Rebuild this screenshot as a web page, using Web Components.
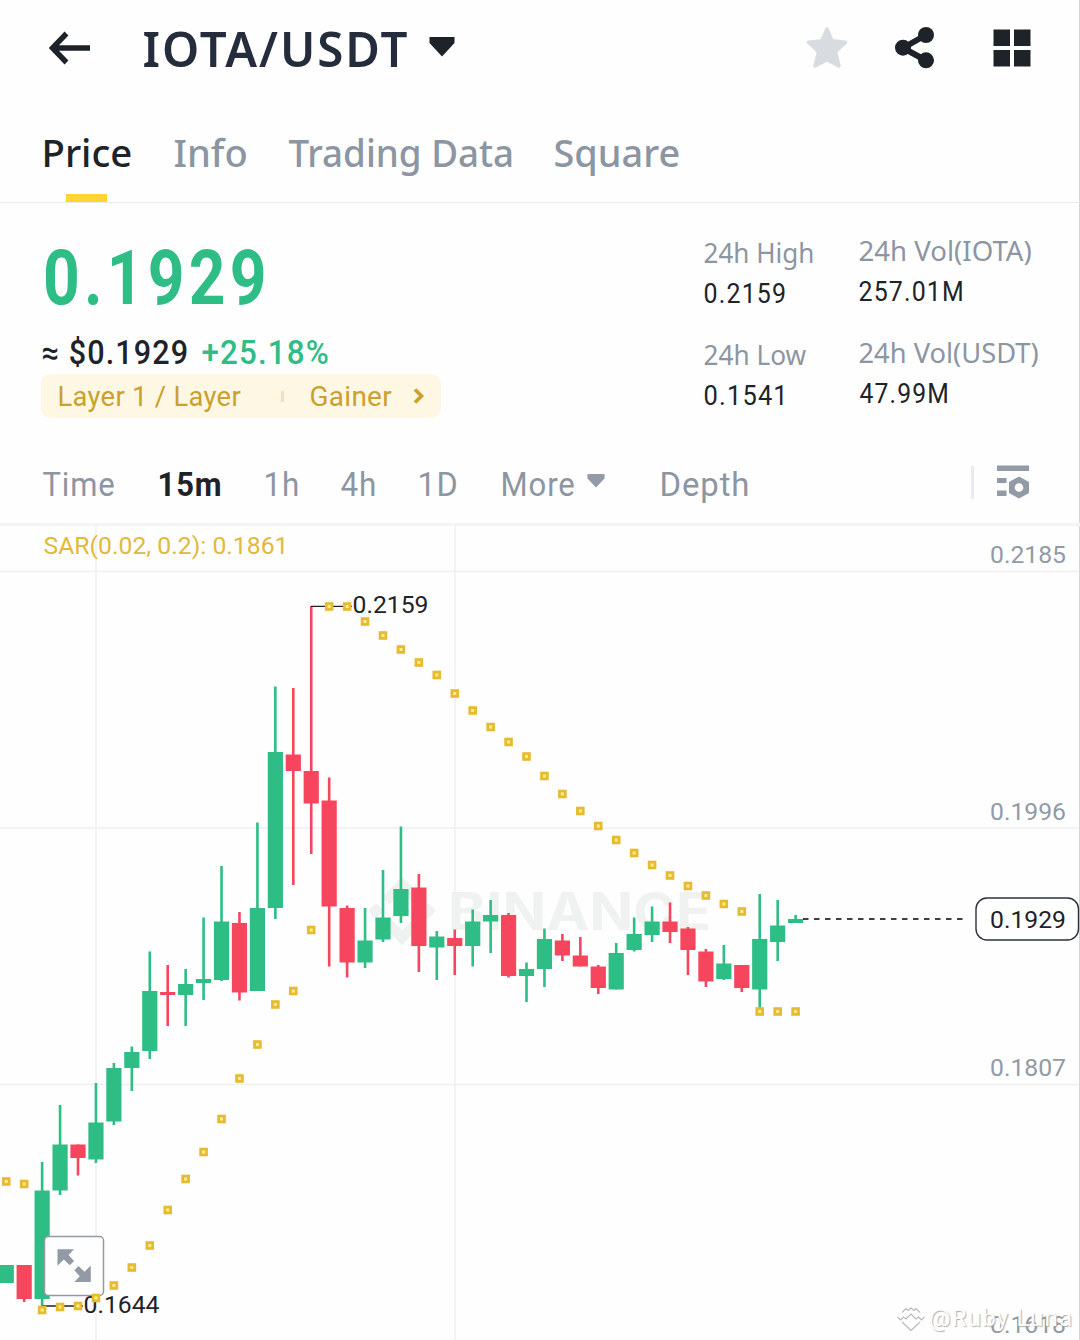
<!DOCTYPE html>
<html lang="en">
<head>
  <meta charset="utf-8" />
  <title>IOTA/USDT</title>
  <style>
    body {
      margin: 0;
      background: #fefefe;
      font-family: Roboto, "Liberation Sans", sans-serif;
      color: #1e2329;
    }
  </style>
</head>
<body>
  <market-page>
    <market-header pair="IOTA/USDT"></market-header>
    <market-tabs>
      <market-tab active><fit-text width="86">Price</fit-text></market-tab>
      <market-tab style="margin-left: 44px"><fit-text width="72">Info</fit-text></market-tab>
      <market-tab style="margin-left: 42px"><fit-text width="223">Trading Data</fit-text></market-tab>
      <market-tab style="margin-left: 43px"><fit-text width="124">Square</fit-text></market-tab>
    </market-tabs>
    <price-summary></price-summary>
    <interval-bar></interval-bar>
    <candle-chart></candle-chart>
  </market-page>

  <template id="tpl-header">
    <style>
      :host {
        display: flex;
        align-items: center;
        height: 96px;
        box-sizing: border-box;
        padding: 0 49.5px 0 49px;
      }
      svg { display: block; flex: none; }
      .title {
        margin-left: 53px;
        font: 600 49px/60px "Noto Sans", sans-serif;
        letter-spacing: 2px;
        color: #252d3c;
      }
      .caret { margin-left: 22px; }
      .star { margin-left: auto; }
      .share { margin-left: 47.5px; }
      .grid { margin-left: 57.5px; }
    </style>
    <svg width="41" height="34" viewBox="0 0 41 34">
      <path d="M41 17H5M17.5 2.5L3.5 17L17.5 31.5" fill="none" stroke="#1e2329" stroke-width="5.4" />
    </svg>
    <fit-text class="title" width="264"></fit-text>
    <svg class="caret" width="26" height="22" viewBox="0 0 26 22">
      <path d="M0.5 0H25.5V6L13 19.5L0.5 6Z" fill="#1e2329" />
    </svg>
    <svg class="star" width="42" height="42" viewBox="0 0 42 42">
      <path d="M21 2L26 13.8L39.5 15.2L29.4 24.6L33 39L21 32.6L9 39L12.6 24.6L2.5 15.2L16 13.8Z"
        fill="#d8dce1" stroke="#d8dce1" stroke-width="3.5" stroke-linejoin="round" />
    </svg>
    <svg class="share" width="40" height="42" viewBox="0 0 40 42">
      <path d="M31 8L8 21L31 33.5" fill="none" stroke="#1e2329" stroke-width="6" />
      <g fill="#1e2329">
        <circle cx="8" cy="20.7" r="8" />
        <circle cx="31" cy="8" r="8" />
        <circle cx="31" cy="33.3" r="8" />
      </g>
    </svg>
    <svg class="grid" width="38" height="38" viewBox="0 0 38 38">
      <path d="M0.5 0.5H17V17H0.5ZM21 0.5H37.5V17H21ZM0.5 21H17V37.5H0.5ZM21 21H37.5V37.5H21Z" fill="#1e2329" />
    </svg>
  </template>

  <template id="tpl-summary">
    <style>
      :host {
        display: flex;
        justify-content: space-between;
        height: 240px;
        box-sizing: border-box;
        padding: 33px 41px 0 41px;
      }
      .left { padding: 2px 0 0 0; }
      .price {
        padding-left: 4px;
        font-size: 76px;
        line-height: 80px;
        font-weight: 700;
        letter-spacing: 5px;
        color: #2ebd85;
        height: 80px;
      }
      .sub {
        display: flex;
        gap: 16px;
        margin-top: 15px;
        padding-left: 1px;
        font-size: 33px;
        line-height: 40px;
        font-weight: 500;
        letter-spacing: 1.2px;
      }
      .up { color: #2ebd85; }
      .tag {
        display: flex;
        align-items: center;
        width: 400px;
        height: 44px;
        box-sizing: border-box;
        margin-top: 1px;
        padding: 0 16px 0 18px;
        border-radius: 10px;
        background: #fef7e4;
        color: #cba02c;
        font-size: 27px;
        line-height: 42px;
        letter-spacing: 0.3px;
      }
      .tag fit-text { padding-top: 2px; }
      .tag i {
        width: 3px;
        height: 11px;
        margin: 0 26px 0 41px;
        background: #f4e2b4;
      }
      .tag svg { margin-left: 22px; }
      .stats {
        display: grid;
        grid-template-columns: 155px 180px;
        gap: 0;
      }
      .col { display: flex; flex-direction: column; gap: 28px; }
      .col:first-child { padding-top: 2px; }
    </style>
    <div class="left">
      <div class="price"><fit-text width="218">0.1929</fit-text></div>
      <div class="sub">
        <fit-text width="144">≈ $0.1929</fit-text>
        <fit-text class="up" width="125">+25.18%</fit-text>
      </div>
      <div class="tag">
        <fit-text width="181">Layer 1 / Layer</fit-text>
        <i></i>
        <fit-text width="81">Gainer</fit-text>
        <svg width="12" height="16" viewBox="0 0 12 16">
          <path d="M2 1.5L8.5 8L2 14.5" fill="none" stroke="#cba02c" stroke-width="3.6" />
        </svg>
      </div>
    </div>
    <div class="stats">
      <div class="col">
        <stat-item label="24h High" value="0.2159" lw="108" vw="80"></stat-item>
        <stat-item label="24h Low" value="0.1541" lw="102" vw="78"></stat-item>
      </div>
      <div class="col">
        <stat-item label="24h Vol(IOTA)" value="257.01M" lw="172" vw="103"></stat-item>
        <stat-item label="24h Vol(USDT)" value="47.99M" lw="179" vw="88"></stat-item>
      </div>
    </div>
  </template>

  <template id="tpl-intervals">
    <style>
      :host {
        display: flex;
        align-items: center;
        height: 83px;
        box-sizing: border-box;
        border-bottom: 3px solid #f3f4f4;
        padding: 0 51px 0 42px;
        font-size: 32.5px;
        line-height: 40px;
        letter-spacing: 0.9px;
        color: #8c95a2;
      }
      fit-text { margin-right: 45px; padding-top: 3px; }
      .on { color: #1e2329; font-weight: 700; }
      .h1 { margin-right: 43px; }
      .d1 { margin-right: 46px; }
      .more { margin-right: 13px; }
      .caret { margin-right: 56px; }
      .sep { width: 3px; height: 33px; margin: -2px 23px 0 auto; background: #e9ebee; }
      .set { margin-top: -2px; }
    </style>
    <fit-text width="72">Time</fit-text>
    <fit-text class="on" width="61">15m</fit-text>
    <fit-text class="h1" width="32">1h</fit-text>
    <fit-text width="34">4h</fit-text>
    <fit-text class="d1" width="37">1D</fit-text>
    <fit-text class="more" width="72">More</fit-text>
    <svg class="caret" width="18" height="18" viewBox="0 0 18 18">
      <path d="M0.5 0H17.5V4.5L9 13.5L0.5 4.5Z" fill="#929aa5" />
    </svg>
    <fit-text width="86">Depth</fit-text>
    <span class="sep"></span>
    <svg class="set" width="32" height="34" viewBox="0 0 32 34" fill="#929aa5">
      <path d="M0 0.5H32V6H0ZM0 13H9.5V18H0ZM0 25.5H9.5V31H0Z" />
      <path fill-rule="evenodd" d="M22 11.5L32 17V28L22 33.5L12 28V17ZM22 18.2A4.3 4.3 0 1 0 22 26.8A4.3 4.3 0 1 0 22 18.2Z" />
    </svg>
  </template>

  <script>
    // Text squeezed or stretched so that its ink is exactly `width` px wide
    class FitText extends HTMLElement {
      connectedCallback() {
        this.attachShadow({ mode: "open" });
        this.shadowRoot.innerHTML = `
          <style>
            :host { display: block; flex: none; white-space: nowrap; }
            span { display: inline-block; transform-origin: 0 50%; }
          </style>
          <span><slot></slot></span>`;
        this.fit();
      }
      fit() {
        const width = Number(this.getAttribute("width"));
        const text = this.textContent.trim();
        const cs = getComputedStyle(this);
        const ctx = FitText.canvas.getContext("2d");
        ctx.font = `${cs.fontWeight} ${cs.fontSize} ${cs.fontFamily}`;
        const m = ctx.measureText(text);
        // letter-spacing falls between the glyphs only
        const gaps = (parseFloat(cs.letterSpacing) || 0) * (text.length - 1);
        const ink = m.actualBoundingBoxLeft + m.actualBoundingBoxRight + gaps;
        if (!ink) return;
        this.style.width = width + "px";
        this.shadowRoot.querySelector("span").style.transform =
          `scaleX(${width / ink}) translateX(${m.actualBoundingBoxLeft + 0.5}px)`;
      }
    }
    FitText.canvas = document.createElement("canvas");

    class MarketPage extends HTMLElement {
      connectedCallback() {
        this.attachShadow({ mode: "open" });
        this.shadowRoot.innerHTML = `
          <style>
            :host {
              display: flex;
              flex-direction: column;
              width: 1080px;
              height: 1340px;
              overflow: hidden;
              box-shadow: inset -1px 0 #d5d6d8;
            }
          </style>
          <slot></slot>`;
      }
    }

    class MarketHeader extends HTMLElement {
      connectedCallback() {
        this.attachShadow({ mode: "open" });
        const view = document.querySelector("#tpl-header").content.cloneNode(true);
        view.querySelector(".title").textContent = this.getAttribute("pair");
        this.shadowRoot.append(view);
      }
    }

    class MarketTabs extends HTMLElement {
      connectedCallback() {
        this.attachShadow({ mode: "open" });
        this.shadowRoot.innerHTML = `
          <style>
            :host {
              display: flex;
              height: 107px;
              box-sizing: border-box;
              padding-left: 44px;
              border-bottom: 1px solid #e9eaec;
            }
          </style>
          <slot></slot>`;
      }
    }

    class MarketTab extends HTMLElement {
      connectedCallback() {
        this.attachShadow({ mode: "open" });
        this.shadowRoot.innerHTML = `
          <style>
            :host {
              display: flex;
              flex-direction: column;
              align-items: center;
              justify-content: space-between;
              padding-top: 36px;
              font: 500 38px/40px "Noto Sans", sans-serif;
              color: #8c95a2;
            }
            :host([active]) { color: #1e2329; }
            :host([active]) i { width: 41px; height: 8px; margin-right: 2px; background: #fcd535; }
          </style>
          <slot></slot><i></i>`;
      }
    }

    class StatItem extends HTMLElement {
      connectedCallback() {
        const at = (name) => this.getAttribute(name);
        this.attachShadow({ mode: "open" });
        this.shadowRoot.innerHTML = `
          <style>
            :host { display: flex; flex-direction: column; gap: 6px; height: 74px; line-height: 34px; }
            .label { font-family: "Noto Sans", sans-serif; font-size: 27.5px; color: #8c95a2; margin-top: -2px; }
            .value { font-size: 28px; letter-spacing: 1.3px; margin-top: 1px; }
          </style>
          <fit-text class="label" width="${at("lw")}">${at("label")}</fit-text>
          <fit-text class="value" width="${at("vw")}">${at("value")}</fit-text>`;
      }
    }

    class PriceSummary extends HTMLElement {
      connectedCallback() {
        this.attachShadow({ mode: "open" });
        this.shadowRoot.append(document.querySelector("#tpl-summary").content.cloneNode(true));
      }
    }

    class IntervalBar extends HTMLElement {
      connectedCallback() {
        this.attachShadow({ mode: "open" });
        this.shadowRoot.append(document.querySelector("#tpl-intervals").content.cloneNode(true));
      }
    }

    // [direction, high, body top, body bottom, low]
    const candles = [
      ["u", 1265, 1265, 1283, 1283], ["d", 1265, 1265, 1299, 1302], ["u", 1162, 1190.5, 1299, 1306],
      ["u", 1105, 1144.5, 1190.5, 1195], ["d", 1144.5, 1144.5, 1158, 1175.5], ["u", 1083, 1122.5, 1159.5, 1163],
      ["u", 1063, 1068, 1121.5, 1125], ["u", 1046.5, 1052, 1068, 1091], ["u", 951.5, 991, 1051, 1059],
      ["d", 965, 992, 995, 1026], ["u", 969, 984, 995, 1026], ["u", 917.5, 979, 983, 1000],
      ["u", 866, 921.5, 980, 981], ["d", 912, 923, 992.5, 1000.5], ["u", 822.5, 908, 991, 991],
      ["u", 686.5, 752, 908, 919], ["d", 688, 754.5, 771, 885], ["d", 606, 771, 803.5, 854],
      ["d", 777.5, 800.5, 906.5, 966.5], ["d", 905.5, 908, 962.5, 977.5], ["u", 908, 940.5, 962.5, 968],
      ["u", 870, 917.5, 939.5, 942], ["u", 826.5, 889, 916, 923], ["d", 874, 887.5, 946, 972],
      ["u", 931, 936.5, 947.5, 980], ["d", 929.5, 938, 946, 975], ["u", 909.5, 921.5, 946, 966.5],
      ["u", 900, 915, 921.5, 953], ["d", 913, 915, 976, 977.5], ["u", 962.5, 969, 976, 1002],
      ["u", 928.5, 939, 969, 987], ["d", 934, 940.5, 955.5, 961], ["d", 937, 955.5, 966.5, 966.5],
      ["d", 965, 966.5, 988, 994], ["u", 943, 953, 989.5, 989.5], ["u", 917.5, 934, 950, 951.5],
      ["u", 906.5, 921.5, 935, 942], ["d", 902.5, 921.5, 932, 943], ["d", 927, 928.5, 950, 975],
      ["d", 949, 951.5, 981.5, 987], ["u", 945, 963.5, 979, 980], ["d", 965, 965, 988, 992],
      ["u", 894, 939, 989.5, 1010], ["u", 900, 925.5, 942, 961], ["u", 915, 919, 923, 923],
    ];
    const sar = [
      1181.5, 1184, 1310, 1307, 1306, 1298, 1285.5, 1267.5, 1245.5, 1210, 1179, 1152, 1119, 1078.5, 1044.5,
      1004.5, 991, 930, 606.5, 606.5, 621.5, 635.5, 649.5, 662.5, 675, 693.5, 710.5, 727, 742, 756.5,
      776, 794, 811, 826, 840, 853, 865, 875.5, 886, 895.5, 904, 911.5, 1011.5, 1011.5, 1011.5,
    ];
    const px = (i) => 6.25 + i * 17.94;

    class CandleChart extends HTMLElement {
      connectedCallback() {
        const bars = candles.map(([dir, h, a, b, l], i) => {
          const x = px(i);
          return `<g class="${dir}"><rect x="${x - 1.3}" y="${h}" width="2.6" height="${l - h}" />
            <rect x="${x - 7.6}" y="${a}" width="15.2" height="${b - a}" /></g>`;
        }).join("");
        const dots = sar.map((y, i) =>
          `<rect class="dot" x="${px(i) - 2.9}" y="${y - 2.9}" width="5.8" height="5.8" />`).join("");
        const axis = [[0.2185, 563], [0.1996, 820], [0.1807, 1076], [0.1618, 1333]].map(([v, y]) =>
          `<text x="990" y="${y}" textLength="76" lengthAdjust="spacingAndGlyphs" fill="#929aa5">${v}</text>`).join("");

        this.attachShadow({ mode: "open" });
        this.shadowRoot.innerHTML = `
          <style>
            :host { display: block; flex: none; height: 814px; }
            svg { display: block; }
            text { font-family: Roboto, sans-serif; font-size: 24px; }
            .u { fill: #2ebd85; }
            .d { fill: #f6465d; }
            .dot { fill: #fff08a; stroke: #e6bb33; stroke-width: 2.8; }
            .mark { fill: #f0f1f1; }
            .ink { fill: #1e2329; }
          </style>
          <svg width="1080" height="814" viewBox="0 526 1080 814">
            <path d="M0 571.5H1079M0 828H1079M0 1084.5H1079M96 526V1340M455 526V1340" stroke="#eff0f2" stroke-width="1.6" />
            <!-- exchange watermark -->
            <g class="mark">
              <path d="M402 877L422 897L414.5 904.5L402 892L389.5 904.5L382 897Z" />
              <path d="M402 945L422 925L414.5 917.5L402 930L389.5 917.5L382 925Z" />
              <path d="M368 911L376 903L384 911L376 919ZM420 911L428 903L436 911L428 919ZM402 903L410 911L402 919L394 911Z" />
              <text x="448" y="930" textLength="263" lengthAdjust="spacingAndGlyphs" style="font: 700 52px Inter, sans-serif">BINANCE</text>
            </g>
            ${axis}
            <text x="43.5" y="554" textLength="245" lengthAdjust="spacingAndGlyphs" fill="#e2b93b">SAR(0.02, 0.2): 0.1861</text>
            ${bars}
            <path d="M803 919H964" stroke="#3b3f4a" stroke-width="1.8" stroke-dasharray="5.5 5.5" />
            <!-- full screen button -->
            <rect x="44.5" y="1236.5" width="59" height="59" rx="4" fill="#fefefe" stroke="#929aa5" stroke-width="1.5" />
            <g fill="#929aa5">
              <path d="M57.5 1249.3H74L68.5 1255L74 1261L69.8 1265.2L63.8 1259.5L57.5 1265.7Z" />
              <path d="M90.8 1282H74.3L79.8 1276.3L74.3 1270.3L78.5 1266.1L84.5 1271.8L90.8 1265.6Z" />
            </g>
            <path d="M311 606.3H352M42 1306H83" stroke="#1e2329" stroke-width="1.3" />
            <text class="ink" x="352.5" y="613" textLength="76" lengthAdjust="spacingAndGlyphs">0.2159</text>
            <text class="ink" x="83.5" y="1313" textLength="76" lengthAdjust="spacingAndGlyphs">0.1644</text>
            ${dots}
            <rect x="976" y="898" width="102.5" height="42" rx="11" fill="#fefefe" stroke="#2b303a" stroke-width="1.4" />
            <text class="ink" x="990" y="928" textLength="76" lengthAdjust="spacingAndGlyphs">0.1929</text>
            <!-- author mark -->
            <g fill="none" stroke="#b5b7ba" stroke-width="1.1">
              <path d="M902 1312.5L906 1308.5L908 1310.5L911 1308L914 1310.5L916 1308.5L920 1312.5" />
              <path d="M897.5 1317L900.5 1320L903.5 1317L906 1319L911 1314L916 1319L918.5 1317L921.5 1320L924.5 1317" />
              <path d="M902 1322L911 1330.5L920 1322" />
            </g>
            <text x="929" y="1326" textLength="143" fill="#fff" style="text-shadow: 1px 1px 1px #999c">@Ruby Luna</text>
          </svg>`;
      }
    }

    customElements.define("market-page", MarketPage);
    customElements.define("market-header", MarketHeader);
    customElements.define("market-tabs", MarketTabs);
    customElements.define("market-tab", MarketTab);
    customElements.define("stat-item", StatItem);
    customElements.define("price-summary", PriceSummary);
    customElements.define("interval-bar", IntervalBar);
    customElements.define("candle-chart", CandleChart);
    // last, so that every parent style is in place when the text is measured
    customElements.define("fit-text", FitText);
  </script>
</body>
</html>
